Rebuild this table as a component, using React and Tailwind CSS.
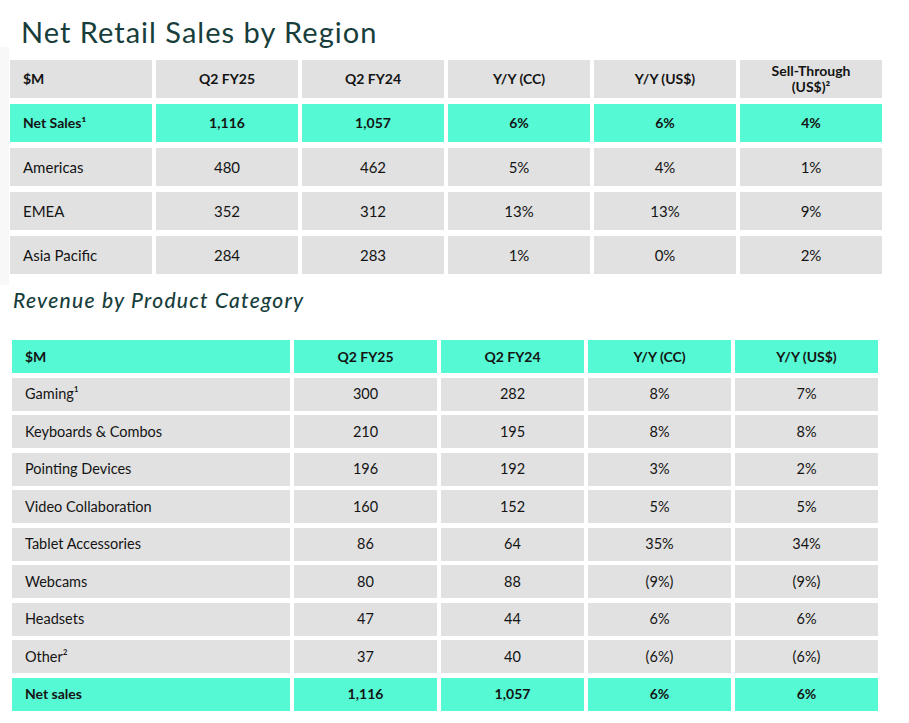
const regionHead = ["$M", "Q2 FY25", "Q2 FY24", "Y/Y (CC)", "Y/Y (US$)"];

const regionRows = [
  ["Americas", "480", "462", "5%", "4%", "1%"],
  ["EMEA", "352", "312", "13%", "13%", "9%"],
  ["Asia Pacific", "284", "283", "1%", "0%", "2%"],
];

const categoryRows = [
  ["Gaming¹", "300", "282", "8%", "7%"],
  ["Keyboards & Combos", "210", "195", "8%", "8%"],
  ["Pointing Devices", "196", "192", "3%", "2%"],
  ["Video Collaboration", "160", "152", "5%", "5%"],
  ["Tablet Accessories", "86", "64", "35%", "34%"],
  ["Webcams", "80", "88", "(9%)", "(9%)"],
  ["Headsets", "47", "44", "6%", "6%"],
  ["Other²", "37", "40", "(6%)", "(6%)"],
];

function Cell({ children, first, tone = "gray", bold, h = "h-[38px]", size = "text-[15px]" }) {
  const bg = tone === "teal" ? "bg-[#55f9d3]" : "bg-[#e1e1e1]";
  return (
    <div
      className={`${h} ${bg} flex items-center ${first ? "justify-start pl-[13px]" : "justify-center"} ${
        bold ? "font-bold text-[14px]" : size
      } text-[#141414] leading-[16px]`}
    >
      {children}
    </div>
  );
}

export default function App() {
  return (
    <div className="w-[909px] h-[723px] bg-white font-['Lato',sans-serif] text-[#141414] overflow-hidden">
      {/* Net retail sales by region */}
      <div className="pt-[14px]">
        <div className="flex">
          <div className="w-[9px] mt-[33px] bg-[#f8f8f8]" />
          <div className="pl-[1px] pb-[11px]">
            <h1 className="pl-[11px] text-[29px] leading-[36px] tracking-[0.035em] text-[#173e3b]">
              Net Retail Sales by Region
            </h1>
            <div className="mt-[10px] grid grid-cols-[repeat(6,142px)] gap-x-[4px] gap-y-[6px]">
              {regionHead.map((t, i) => (
                <Cell key={t} first={i === 0} bold>
                  {t}
                </Cell>
              ))}
              <Cell bold>
                <span className="text-center">
                  Sell-Through
                  <br />
                  (US$)²
                </span>
              </Cell>

              {["Net Sales¹", "1,116", "1,057", "6%", "6%", "4%"].map((t, i) => (
                <Cell key={i} first={i === 0} tone="teal" bold>
                  {t}
                </Cell>
              ))}

              {regionRows.map((row) =>
                row.map((t, i) => (
                  <Cell key={row[0] + i} first={i === 0}>
                    {t}
                  </Cell>
                ))
              )}
            </div>
          </div>
        </div>
      </div>

      {/* Revenue by product category */}
      <h2 className="mt-[1px] pl-[13px] text-[21px] leading-[28px] italic font-medium tracking-[0.06em] text-[#173e3b]">
        Revenue by Product Category
      </h2>
      <div className="mt-[26px] ml-[12px] grid grid-cols-[278px_repeat(4,143px)] gap-x-[4px] gap-y-[4.5px]">
        {["$M", "Q2 FY25", "Q2 FY24", "Y/Y (CC)", "Y/Y (US$)"].map((t, i) => (
          <Cell key={t} first={i === 0} tone="teal" bold h="h-[33px]">
            {t}
          </Cell>
        ))}
        {categoryRows.map((row) =>
          row.map((t, i) => (
            <Cell key={row[0] + i} first={i === 0} h="h-[33px]" size="text-[14.5px]">
              {t}
            </Cell>
          ))
        )}
        {["Net sales", "1,116", "1,057", "6%", "6%"].map((t, i) => (
          <Cell key={"n" + i} first={i === 0} tone="teal" bold h="h-[33px]">
            {t}
          </Cell>
        ))}
      </div>
    </div>
  );
}
